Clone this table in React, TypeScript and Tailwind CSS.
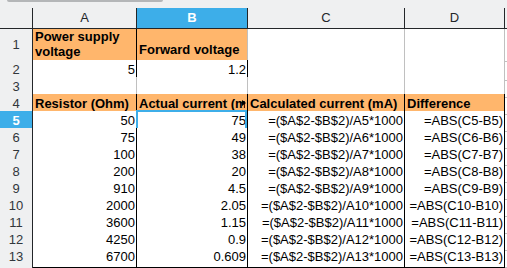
import React from "react";

type Cell = {
  text?: string;
  bold?: boolean;
  right?: boolean;
  fill?: boolean;
  wrap?: boolean;
  clip?: boolean;
};

const COLS = ["A", "B", "C", "D"];
const GRID = "grid grid-cols-[33px_104px_111px_157px_100px_1fr]";

const resistors = [
  [50, 75],
  [75, 49],
  [100, 38],
  [200, 20],
  [910, 4.5],
  [2000, 2.05],
  [3600, 1.15],
  [4250, 0.9],
  [6700, 0.609],
];

const rows: Cell[][] = [
  [
    { text: "Power supply voltage", bold: true, fill: true, wrap: true },
    { text: "Forward voltage", bold: true, fill: true },
    {},
    {},
  ],
  [{ text: "5", right: true }, { text: "1.2", right: true }, {}, {}],
  [{}, {}, {}, {}],
  [
    { text: "Resistor (Ohm)", bold: true, fill: true },
    { text: "Actual current (mA)", bold: true, fill: true, clip: true },
    { text: "Calculated current (mA)", bold: true, fill: true },
    { text: "Difference", bold: true, fill: true },
  ],
  ...resistors.map(([ohm, ma], i) => {
    const n = i + 5;
    return [
      { text: String(ohm), right: true },
      { text: String(ma), right: true },
      { text: `=($A$2-$B$2)/A${n}*1000`, right: true },
      { text: `=ABS(C${n}-B${n})`, right: true },
    ];
  }),
];

// which cell edges carry a drawn (black) border
function rightEdge(r: number, c: number) {
  if (r >= 4 && r <= 13) return true;
  if (r === 1) return c === 0;
  if (r === 2) return c <= 1;
  return false;
}

function bottomEdge(r: number, c: number) {
  if (r >= 3 && r <= 13) return c <= 3;
  if (r === 1) return c <= 1;
  return false;
}

function DataCell({ cell, r, c }: { cell: Cell; r: number; c: number }) {
  const selected = r === 5 && c === 1;
  const tall = r === 1;
  return (
    <div
      className={[
        "relative flex border-r border-b px-[2px] whitespace-nowrap",
        tall ? "items-end pb-[2px]" : "items-center",
        cell.right ? "justify-end pr-[1px]" : "justify-start",
        cell.fill ? "bg-[#ffb66c]" : "bg-white",
        cell.bold ? "font-bold" : "",
        rightEdge(r, c) ? "border-r-black" : "border-r-[#c0c0c0]",
        bottomEdge(r, c) ? "border-b-black" : "border-b-[#c0c0c0]",
        cell.clip ? "overflow-hidden" : "",
      ].join(" ")}
    >
      {cell.wrap ? (
        <span className="whitespace-normal leading-[15px]">{cell.text}</span>
      ) : (
        <span className={cell.clip ? "w-[106px] overflow-hidden" : ""}>{cell.text}</span>
      )}
      {cell.clip && (
        <svg className="absolute right-[1px] top-[6px]" width="4" height="6" viewBox="0 0 4 6">
          <path d="M0 0 L4 3 L0 6 Z" fill="#000" />
        </svg>
      )}
      {selected && (
        <>
          <span className="pointer-events-none absolute -left-px -top-px right-0 bottom-0 border-2 border-[#3daee9]" />
          <span className="absolute -right-[3px] -bottom-[3px] h-[5px] w-[5px] bg-[#3daee9]" />
        </>
      )}
    </div>
  );
}

export default function App() {
  return (
    <div
      className="h-[268px] w-[507px] overflow-hidden bg-white text-[13px] text-black"
      style={{ fontFamily: '"Liberation Sans", Arial, sans-serif' }}
    >
      {/* scroll strip */}
      <div className="h-[8px] bg-[#eff0f1]">
        <div className="ml-[7px] h-[2px] w-[156px] rounded-b-sm bg-[#b4b6b8]" />
      </div>

      {/* column headers */}
      <div className={`${GRID} h-[21px] bg-[#eff0f1] text-[#232629]`}>
        <div className="border-r border-b border-[#232629]" />
        {COLS.map((c) => (
          <div
            key={c}
            className={`flex items-center justify-center border-r border-b border-[#232629] ${
              c === "B" ? "bg-[#3daee9] font-bold text-white" : ""
            }`}
          >
            {c}
          </div>
        ))}
        <div className="border-b border-[#232629]" />
      </div>

      {rows.map((row, i) => {
        const r = i + 1;
        return (
          <div key={r} className={`${GRID} ${r === 1 ? "h-[31px]" : "h-[17px]"}`}>
            <div
              className={`flex items-center justify-center border-r border-b border-r-[#232629] border-b-[#c0c0c0] ${
                r === 5 ? "bg-[#3daee9] font-bold text-white" : "bg-[#eff0f1] text-[#31363b]"
              }`}
            >
              {r}
            </div>
            {row.map((cell, c) => (
              <DataCell key={c} cell={cell} r={r} c={c} />
            ))}
            <div className="border-b border-[#c0c0c0]" />
          </div>
        );
      })}

      {/* row 14, mostly out of view */}
      <div className={`${GRID} h-[17px]`}>
        <div className="border-r border-[#232629] bg-[#eff0f1]" />
        {COLS.map((c) => (
          <div key={c} className="border-r border-[#c0c0c0]" />
        ))}
        <div />
      </div>
    </div>
  );
}
